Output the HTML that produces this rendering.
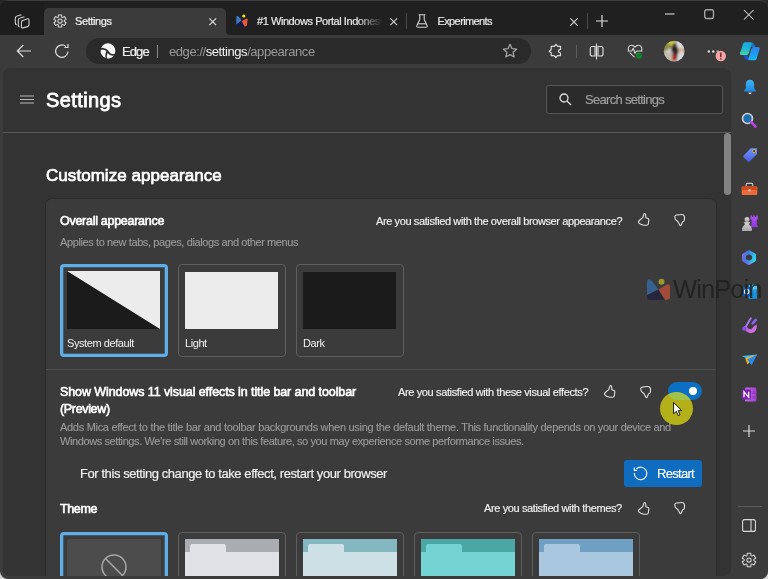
<!DOCTYPE html>
<html><head><meta charset="utf-8">
<style>
*{margin:0;padding:0;box-sizing:border-box}
html,body{width:768px;height:579px;overflow:hidden;background:linear-gradient(#282828 50%,#d4d4d4 50%)}
body{font-family:"Liberation Sans",sans-serif;color:#fff;position:relative}
.a{position:absolute}
.t{position:absolute;white-space:nowrap;line-height:1}
.sb{-webkit-text-stroke:0.6px currentColor}
svg{position:absolute;overflow:visible}
#win{will-change:transform;position:absolute;left:0;top:0;width:768px;height:579px;background:#3b3b3b;border-radius:8px;overflow:hidden}
#strip{position:absolute;left:0;top:0;width:768px;height:35px;background:#202020}
#wb{position:absolute;left:0;top:0;width:768px;height:579px;border-radius:8px;border-top:1px solid #3e3e3e;pointer-events:none}
#content{position:absolute;left:3px;top:68px;width:728px;height:508px;background:#333333;border-radius:7px;overflow:hidden}
.card{position:absolute;background:#3b3b3b;border-radius:6px;box-shadow:0 0 0 1px rgba(0,0,0,.14)}
.sec{color:#9c9c9c}
.tile{position:absolute;width:108px;height:93px;border:1px solid #5e5e5e;border-radius:4px}
.tile.sel{border:3px solid #5eaeea;box-shadow:inset 0 0 0 0.6px rgba(94,174,234,.5)}
.prev{position:absolute;width:93px;height:58px}
.lbl{position:absolute;font-size:11px;letter-spacing:-0.42px;color:#f2f2f2;white-space:nowrap;line-height:1}
.ttile{position:absolute;width:108px;height:60px;border:1px solid #5e5e5e;border-radius:4px}
.ttile.sel{border:3px solid #5eaeea;box-shadow:inset 0 0 0 0.6px rgba(94,174,234,.5)}
</style></head><body>
<div id="win">
  <div id="strip"></div><div id="wb"></div>
  <!-- workspaces button -->
  <div class="a" style="left:0;top:1px;width:44px;height:34px;background:#1d1d1d;border-radius:0 0 4px 0"></div>
  <svg style="left:13px;top:13px" width="18" height="16" viewBox="0 0 18 16" fill="none" stroke="#cfcfcf" stroke-width="1.1" stroke-linejoin="round"><path d="M8.5 1.8 L4.2 3 C3 3.3 2.3 4 2.3 5.2 V9.8 C2.3 11 2.8 11.6 3.8 12"/><path d="M11.5 3.8 L7.2 5 C6 5.3 5.3 6 5.3 7.2 V12.2 C5.3 13.2 5.8 13.8 6.6 14"/><path d="M9.8 7.4 C8.8 7.7 8.4 8.3 8.4 9.3 V13.8 C8.4 14.8 9 15.2 10 14.9 L14.5 13.6 C15.5 13.3 16 12.7 16 11.7 V7 C16 6 15.4 5.5 14.4 5.8 Z"/></svg>
  <!-- active tab -->
  <div class="a" style="left:44px;top:8px;width:182px;height:30px;background:#3b3b3b;border-radius:5px 5px 0 0"></div><div class="a" style="left:226px;top:30px;width:5px;height:5px;background:#3b3b3b"></div><div class="a" style="left:226px;top:8px;width:50px;height:27px;background:#202020;border-radius:0 0 0 4px"></div>
  <svg style="left:53px;top:14px" width="14" height="14" viewBox="0 0 14 14" fill="none" stroke="#d6d6d6" stroke-width="1.05" stroke-linejoin="round"><path d="M5.35 3.03 L5.37 0.91 L8.63 0.91 L8.65 3.03 L9.62 3.59 L11.45 2.55 L13.09 5.37 L11.26 6.44 L11.26 7.56 L13.09 8.63 L11.45 11.45 L9.62 10.41 L8.65 10.97 L8.63 13.09 L5.37 13.09 L5.35 10.97 L4.38 10.41 L2.55 11.45 L0.91 8.63 L2.74 7.56 L2.74 6.44 L0.91 5.37 L2.55 2.55 L4.38 3.59 Z"/><circle cx="7" cy="7" r="2.1"/></svg>
  <div class="t" style="left:75px;top:15.5px;font-size:11px;letter-spacing:-0.41px;color:#f0f0f0;-webkit-text-stroke:0.2px #f0f0f0">Settings</div>
  <svg style="left:209px;top:18px" width="7.5" height="7.5" viewBox="0 0 10 10" stroke="#e2e2e2" stroke-width="1.5"><path d="M0.5 0.5 L9.5 9.5 M9.5 0.5 L0.5 9.5"/></svg>
  <!-- tab 2 -->
  <svg style="left:235px;top:14px" width="14" height="14" viewBox="0 0 14 14"><path d="M1.3 2.8 C1.3 2 2 1.7 2.6 2.1 L6 5 L6.4 12.5 L1.3 10.6 Z" fill="#3a7ac6"/><path d="M1.3 10.6 L6 6.8 L9.8 12.8 L2.8 12.8 C2 12.8 1.3 12 1.3 11.2 Z" fill="#141a4a"/><path d="M6.6 7.2 L11.6 4.6 C12.2 4.3 12.6 4.7 12.6 5.3 L12 11.6 L9.8 12.8 Z" fill="#e8583a"/><circle cx="8.8" cy="2" r="1.6" fill="#f2e626"/></svg>
  <div class="t" style="left:257px;top:15.5px;font-size:11px;letter-spacing:-0.44px;color:#e8e8e8;-webkit-text-stroke:0.2px #e8e8e8;width:125px;overflow:hidden;-webkit-mask-image:linear-gradient(90deg,#000 80%,transparent)">#1 Windows Portal Indonesia</div>
  <svg style="left:389.5px;top:18px" width="7.5" height="7.5" viewBox="0 0 10 10" stroke="#d6d6d6" stroke-width="1.4"><path d="M0.5 0.5 L9.5 9.5 M9.5 0.5 L0.5 9.5"/></svg>
  <div class="a" style="left:406px;top:13px;width:1px;height:16px;background:#4a4a4a"></div>
  <!-- tab 3 -->
  <svg style="left:416px;top:14px" width="12" height="14" viewBox="0 0 12 14" fill="none" stroke="#d0d0d0" stroke-width="1.1" stroke-linejoin="round"><path d="M2.6 0.8 H9.4 M3.8 0.8 V5.6 L0.9 11.6 C0.5 12.5 1 13.2 2 13.2 H10 C11 13.2 11.5 12.5 11.1 11.6 L8.2 5.6 V0.8"/><path d="M2 9.8 H10"/></svg>
  <div class="t" style="left:437.5px;top:15.5px;font-size:11px;letter-spacing:-0.61px;color:#e8e8e8;-webkit-text-stroke:0.2px #e8e8e8">Experiments</div>
  <svg style="left:569.5px;top:17.5px" width="8" height="8" viewBox="0 0 10 10" stroke="#d6d6d6" stroke-width="1.4"><path d="M0.5 0.5 L9.5 9.5 M9.5 0.5 L0.5 9.5"/></svg>
  <div class="a" style="left:587px;top:13px;width:1px;height:16px;background:#4a4a4a"></div>
  <svg style="left:596px;top:15px" width="12" height="12" viewBox="0 0 12 12" stroke="#e0e0e0" stroke-width="1.2"><path d="M6 0 V12 M0 6 H12"/></svg>
  <!-- window controls -->
  <svg style="left:665px;top:14px" width="10" height="1" viewBox="0 0 10 1" stroke="#a8a8a8" stroke-width="1.4"><path d="M0 0 H9.5"/></svg>
  <svg style="left:704px;top:9px" width="10" height="10" viewBox="0 0 10 10" fill="none" stroke="#a4a4a4" stroke-width="1.4"><rect x="0.7" y="0.7" width="8.8" height="8.8" rx="2"/></svg>
  <svg style="left:744px;top:9.5px" width="9.5" height="9.5" viewBox="0 0 10 10" stroke="#d8d8d8" stroke-width="1.1"><path d="M0 0 L10 10 M10 0 L0 10"/></svg>

  <!-- toolbar -->
  <svg style="left:16px;top:44px" width="16" height="14" viewBox="0 0 16 14" fill="none" stroke="#dcdcdc" stroke-width="1.2"><path d="M15 7 H1.5 M7.3 1 L1.3 7 L7.3 13"/></svg>
  <svg style="left:54px;top:43px" width="16" height="16" viewBox="0 0 16 16" fill="none" stroke="#dcdcdc" stroke-width="1.2"><path d="M14 8.5 A6.2 6.2 0 1 1 12 3.6"/><path d="M14 1 V4.5 H10.5"/></svg>
  <div class="a" style="left:86px;top:38px;width:445px;height:25.5px;background:#2a2a2a;border-radius:13px"></div><div class="a" style="left:497px;top:38px;width:1px;height:25.5px;background:#2c2c2c"></div>
  <svg style="left:98px;top:41px" width="20" height="20" viewBox="0 0 20 20" fill="#f6f6f6"><path d="M3.1 6.7 A7.3 7.3 0 0 1 16.7 12.9 C14.8 13.4 12.8 13 11.6 11.6 C10.4 10 9.6 7.2 3.1 6.7 Z"/><path d="M2.7 9 C5 8.6 7.2 9.1 8.4 10.3 C7.5 12 7.1 14.2 7.6 16.9 A7.2 7.2 0 0 1 2.7 9 Z"/><path d="M9.7 12 C11 13.9 13.3 15 16.1 14.6 A7.2 7.2 0 0 1 8.9 17.3 C8.7 15.1 8.9 13.4 9.7 12 Z"/></svg>
  <div class="t" style="left:122px;top:45px;font-size:13px;letter-spacing:-0.9px;color:#f0f0f0;-webkit-text-stroke:0.2px #f0f0f0">Edge</div>
  <div class="a" style="left:157px;top:45px;width:1px;height:13px;background:#8a8a8a"></div>
  <div class="t" style="left:169px;top:45px;font-size:13px;letter-spacing:-0.43px;color:#9a9a9a">edge://<span style="color:#f4f4f4">settings</span>/appearance</div>
  <svg style="left:502px;top:43px" width="16" height="16" viewBox="0 0 16 16" fill="none" stroke="#a6a6a6" stroke-width="1.25" stroke-linejoin="round"><path d="M8 1.3 L10 5.7 L14.6 6.2 L11.1 9.3 L12.1 14 L8 11.6 L3.9 14 L4.9 9.3 L1.4 6.2 L6 5.7 Z"/></svg>
  <svg style="left:546px;top:42px" width="18" height="18" viewBox="0 0 18 18" fill="none" stroke="#dcdcdc" stroke-width="1.2" stroke-linejoin="round"><path d="M5.2 4.3 H8.3 L10 2.4 L11.7 4.3 H14.5 V7.4 C13.2 7.6 12.4 8.3 12.4 9.2 C12.4 10.1 13.2 10.8 14.5 11 V13.6 H11.5 L9.8 15.5 L8.1 13.6 H5.2 V10.9 L3.3 9.2 L5.2 7.5 Z"/></svg>
  <div class="a" style="left:576px;top:45px;width:1px;height:13px;background:#5c5c5c"></div>
  <svg style="left:589px;top:44px" width="16" height="15" viewBox="0 0 16 15" fill="none" stroke="#dcdcdc" stroke-width="1.15"><path d="M6 2.5 H3.3 C2 2.5 1.3 3.3 1.3 4.5 V10 C1.3 11.2 2 12 3.3 12 H6 Z"/><path d="M9 2.5 H12 C13.3 2.5 14 3.3 14 4.5 V10 C14 11.2 13.3 12 12 12 H9 Z"/><path d="M7.5 -0.5 V15.5" stroke-width="1.1"/></svg>
  <svg style="left:627px;top:44px" width="17" height="15" viewBox="0 0 17 15" fill="none" stroke="#d8d8d8" stroke-width="1.1" stroke-linejoin="round" stroke-linecap="round"><path d="M1.6 6.6 C0.6 4 1.8 1.3 4.5 1.3 C6 1.3 7.3 2.2 8 3.1 C8.7 2.2 10 1.3 11.5 1.3 C14.2 1.3 15.4 4 14.7 6.6"/><path d="M1 7 H4.8 L6.3 4.2 L8 9.3 L9.5 7 H15"/><path d="M3 8.8 L7.2 12.8"/><circle cx="12" cy="11.6" r="3.1" fill="#148a2c" stroke="none"/><path d="M10.6 11.7 L11.6 12.6 L13.4 10.7" stroke="#0c4a18" stroke-width="0.8"/></svg>
  <svg style="left:663px;top:40px" width="22" height="22" viewBox="0 0 22 22"><defs><clipPath id="av"><circle cx="11.2" cy="11.2" r="10.5"/></clipPath><filter id="avb" x="-10%" y="-10%" width="120%" height="120%"><feGaussianBlur stdDeviation="0.8"/></filter></defs><g clip-path="url(#av)"><g filter="url(#avb)"><rect width="22" height="22" fill="#dadada"/><rect x="13" y="8" width="9" height="4" fill="#d8b490"/><path d="M0 0 H13 V5 C10 7 6 9 3 11 L0 12 Z" fill="#8e8c48"/><path d="M4 0 H12 L11.5 4 C9.5 5 7 5 5.5 4 Z" fill="#d6cc3a"/><rect x="0" y="12" width="9" height="10" fill="#c4bcae"/><circle cx="11.8" cy="5.2" r="2" fill="#282222"/><path d="M8.5 7.5 C9 6.8 10 6.6 11.8 6.6 C13.5 6.6 14.6 7 15 8 L15.5 12 L14.5 15 L13.5 20.5 H9.5 L9 14.5 L8 11 Z" fill="#2a2424"/><rect x="9.3" y="14.5" width="3" height="6.5" fill="#cc2a2a"/><rect x="12.3" y="14" width="1.8" height="5.5" fill="#7a2222"/><rect x="7.5" y="11.5" width="2.5" height="2.5" fill="#e8e8e8" opacity=".6"/></g></g></svg>
  <svg style="left:704px;top:46px" width="26" height="18" viewBox="0 0 26 18"><circle cx="4.8" cy="5.4" r="1.25" fill="#d8d8d8"/><circle cx="9.3" cy="5.4" r="1.25" fill="#d8d8d8"/><circle cx="13.7" cy="5.4" r="1.25" fill="#a8a8a8"/><circle cx="16.8" cy="10" r="5.2" fill="#f3a4a4"/><rect x="16" y="6.6" width="1.6" height="4.6" rx=".6" fill="#7a3030"/><circle cx="16.8" cy="12.8" r=".85" fill="#7a3030"/></svg>
  <svg style="left:736px;top:38px" width="28" height="26" viewBox="0 0 28 26"><defs><linearGradient id="cp1" x1="0" y1="0" x2="0" y2="1"><stop offset="0" stop-color="#18a8e8"/><stop offset="0.55" stop-color="#20b8d0"/><stop offset="1" stop-color="#48d898"/></linearGradient><linearGradient id="cp2" x1="0" y1="0" x2="0" y2="1"><stop offset="0" stop-color="#3080ec"/><stop offset="0.6" stop-color="#1aa0f0"/><stop offset="1" stop-color="#18b8f0"/></linearGradient></defs><path d="M13 4.3 H15 C16.5 4.3 17.5 5 18 6 L19.5 9 H15 Z" fill="#1878b8"/><path d="M7 17 H10.5 L14 22.3 H12 C10.5 22.3 9.5 21.6 9 20.6 Z" fill="#2050d8"/><path d="M18 9 H22 C23.3 9 23.9 9.8 23.6 11 L20.7 20.4 C20.4 21.6 19.6 22.3 18.4 22.3 H14 C12.8 22.3 12.2 21.5 12.5 20.3 L15.4 10.7 C15.8 9.6 16.7 9 18 9 Z" fill="url(#cp2)"/><path d="M9.5 4.3 H14 C15.3 4.3 15.9 5.1 15.6 6.3 L12.8 15.3 C12.5 16.4 11.8 17 10.7 17 H5.5 C4.3 17 3.7 16.2 4 15 L7 6 C7.4 4.9 8.3 4.3 9.5 4.3 Z" fill="url(#cp1)"/></svg>

  <!-- content -->
  <div id="content">
    <svg style="left:17px;top:26px" width="14" height="10" viewBox="0 0 14 10" stroke="#b8b8b8" stroke-width="1.1"><path d="M0 2 H14 M0 5.5 H14 M0 9 H14"/></svg>
    <div class="t sb" style="left:43px;top:22px;font-size:20px;letter-spacing:0.4px;color:#fff;-webkit-text-stroke:0.8px #fff">Settings</div>
    <div class="a" style="left:543px;top:17px;width:177px;height:29px;background:#2b2b2b;border:1px solid #555;border-radius:3px"></div>
    <svg style="left:556px;top:25px" width="13" height="13" viewBox="0 0 13 13" fill="none" stroke="#e0e0e0" stroke-width="1.3"><circle cx="5" cy="5" r="4"/><path d="M8 8 L12 12"/></svg>
    <div class="t" style="left:582px;top:25px;font-size:13px;letter-spacing:-0.7px;color:#a0a0a0;-webkit-text-stroke:0.15px #a0a0a0">Search settings</div>
    <div class="a" style="left:0;top:64px;width:728px;height:1px;background:#5a5a5a"></div>
    <!-- scrollbar -->
    <div class="a" style="left:721px;top:65px;width:7px;height:62px;background:#828282;border-radius:4px"></div>

    <div class="t sb" style="left:43px;top:99px;font-size:17px;letter-spacing:0.05px;color:#fff;-webkit-text-stroke:0.7px #fff">Customize appearance</div>

    <div class="card" style="left:43px;top:131px;width:670px;height:420px">
      <div class="t sb" style="left:14px;top:15.5px;font-size:12.5px;letter-spacing:-0.28px">Overall appearance</div>
      <div class="t" style="left:330px;top:17px;font-size:11px;letter-spacing:-0.39px;color:#f2f2f2;-webkit-text-stroke:0.15px #f2f2f2">Are you satisfied with the overall browser appearance?</div>
      <svg style="left:591px;top:13px" width="14" height="14" viewBox="0 0 14 14" fill="none" stroke="#e2e2e2" stroke-width="1.1" stroke-linejoin="round"><path d="M7.5 1.5 C8.5 1.5 9 3 8.8 5.8 L11 6.5 C11.8 6.8 11.9 7.5 11.8 8 L11.3 12 C11.2 12.8 10.5 13.2 9.5 13.2 L7 13.2 C5 13 3 12 1.8 10.8 C1.2 10 1.6 9 2.5 8.3 L5.8 5.6 L6.8 2.3 C7 1.7 7.2 1.5 7.5 1.5 Z"/></svg>
      <svg style="left:625.5px;top:13px" width="14" height="14" viewBox="0 0 14 14" fill="none" stroke="#e2e2e2" stroke-width="1.1" stroke-linejoin="round"><path d="M2.8 5.2 C2.5 3.8 3.5 3.2 5 3 L9 2.5 C11 2.3 12.3 3 12.5 5 L12.5 7.5 C12.5 8.8 11.5 9.6 10.5 10 L9.2 13 C8.9 13.8 8.2 13.9 7.9 13.2 L5.8 9.5 L3.6 7.6 C3.1 7 2.9 6.2 2.8 5.2 Z"/></svg>
      <div class="t sec" style="left:14px;top:38px;font-size:11px;letter-spacing:-0.39px;-webkit-text-stroke:0.1px #9c9c9c">Applies to new tabs, pages, dialogs and other menus</div>

      <div class="tile sel" style="left:14px;top:65px">
        <svg style="left:4.3px;top:4px" width="93" height="58"><rect width="93" height="58" fill="#ececec"/><path d="M0 0 L93 58 H0 Z" fill="#1b1b1b"/></svg>
        <div class="lbl" style="left:4px;top:71px">System default</div>
      </div>
      <div class="tile" style="left:132px;top:65px">
        <div class="prev" style="left:6px;top:6.5px;height:57.5px;background:#ececec"></div>
        <div class="lbl" style="left:6px;top:73px">Light</div>
      </div>
      <div class="tile" style="left:250px;top:65px">
        <div class="prev" style="left:6px;top:6.5px;height:57.5px;background:#1b1b1b"></div>
        <div class="lbl" style="left:6px;top:73px">Dark</div>
      </div>

      <div class="a" style="left:0;top:170px;width:670px;height:1px;background:#4c4c4c"></div>

      <div class="t sb" style="left:14px;top:186.5px;font-size:12.5px;letter-spacing:-0.09px">Show Windows 11 visual effects in title bar and toolbar</div>
      <div class="t sb" style="left:14px;top:203.5px;font-size:12.5px;letter-spacing:-0.34px">(Preview)</div>
      <div class="t" style="left:352px;top:188px;font-size:11px;letter-spacing:-0.37px;color:#f2f2f2;-webkit-text-stroke:0.15px #f2f2f2">Are you satisfied with these visual effects?</div>
      <svg style="left:557px;top:185px" width="14" height="14" viewBox="0 0 14 14" fill="none" stroke="#e2e2e2" stroke-width="1.1" stroke-linejoin="round"><path d="M7.5 1.5 C8.5 1.5 9 3 8.8 5.8 L11 6.5 C11.8 6.8 11.9 7.5 11.8 8 L11.3 12 C11.2 12.8 10.5 13.2 9.5 13.2 L7 13.2 C5 13 3 12 1.8 10.8 C1.2 10 1.6 9 2.5 8.3 L5.8 5.6 L6.8 2.3 C7 1.7 7.2 1.5 7.5 1.5 Z"/></svg>
      <svg style="left:591.5px;top:185px" width="14" height="14" viewBox="0 0 14 14" fill="none" stroke="#e2e2e2" stroke-width="1.1" stroke-linejoin="round"><path d="M2.8 5.2 C2.5 3.8 3.5 3.2 5 3 L9 2.5 C11 2.3 12.3 3 12.5 5 L12.5 7.5 C12.5 8.8 11.5 9.6 10.5 10 L9.2 13 C8.9 13.8 8.2 13.9 7.9 13.2 L5.8 9.5 L3.6 7.6 C3.1 7 2.9 6.2 2.8 5.2 Z"/></svg>
      <div class="a" style="left:622px;top:183px;width:34px;height:18px;border-radius:9px;background:#0b6fc4"></div>
      <div class="a" style="left:643px;top:188px;width:8px;height:8px;border-radius:50%;background:#fff"></div>
      <div class="t sec" style="left:14px;top:223px;font-size:11px;letter-spacing:-0.3px;-webkit-text-stroke:0.1px #9c9c9c">Adds Mica effect to the title bar and toolbar backgrounds when using the default theme. This functionality depends on your device and</div>
      <div class="t sec" style="left:14px;top:237px;font-size:11px;letter-spacing:-0.4px;-webkit-text-stroke:0.1px #9c9c9c">Windows settings. We’re still working on this feature, so you may experience some performance issues.</div>

      <div class="t" style="left:34px;top:268px;font-size:13px;letter-spacing:-0.42px;color:#f2f2f2;-webkit-text-stroke:0.15px #f2f2f2">For this setting change to take effect, restart your browser</div>
      <div class="a" style="left:577.5px;top:261px;width:78.5px;height:27px;background:#0f6cbf;border-radius:3px"></div>
      <svg style="left:587px;top:267px" width="15" height="15" viewBox="0 0 15 15" fill="none" stroke="#f4f4f4" stroke-width="1.15"><path d="M3.2 2.9 A6.3 6.3 0 1 1 1.3 7"/><path d="M1.3 1.5 V4.3 H4.1"/></svg>
      <div class="t" style="left:611px;top:268px;font-size:13px;letter-spacing:-0.7px;color:#fff;-webkit-text-stroke:0.15px #fff">Restart</div>

      <div class="t sb" style="left:14px;top:303.5px;font-size:12.5px;letter-spacing:-0.38px">Theme</div>
      <div class="t" style="left:438px;top:304px;font-size:11px;letter-spacing:-0.38px;color:#f2f2f2;-webkit-text-stroke:0.15px #f2f2f2">Are you satisfied with themes?</div>
      <svg style="left:591px;top:301.5px" width="14" height="14" viewBox="0 0 14 14" fill="none" stroke="#e2e2e2" stroke-width="1.1" stroke-linejoin="round"><path d="M7.5 1.5 C8.5 1.5 9 3 8.8 5.8 L11 6.5 C11.8 6.8 11.9 7.5 11.8 8 L11.3 12 C11.2 12.8 10.5 13.2 9.5 13.2 L7 13.2 C5 13 3 12 1.8 10.8 C1.2 10 1.6 9 2.5 8.3 L5.8 5.6 L6.8 2.3 C7 1.7 7.2 1.5 7.5 1.5 Z"/></svg>
      <svg style="left:625.5px;top:301px" width="14" height="14" viewBox="0 0 14 14" fill="none" stroke="#e2e2e2" stroke-width="1.1" stroke-linejoin="round"><path d="M2.8 5.2 C2.5 3.8 3.5 3.2 5 3 L9 2.5 C11 2.3 12.3 3 12.5 5 L12.5 7.5 C12.5 8.8 11.5 9.6 10.5 10 L9.2 13 C8.9 13.8 8.2 13.9 7.9 13.2 L5.8 9.5 L3.6 7.6 C3.1 7 2.9 6.2 2.8 5.2 Z"/></svg>

      <div class="ttile sel" style="left:14px;top:333px">
        <div class="a" style="left:4px;top:4px;width:94px;height:60px;background:#4c4c4c;border-radius:2px"></div>
        <svg style="left:38px;top:19px" width="26" height="26" viewBox="0 0 26 26" fill="none" stroke="#a8a8a8" stroke-width="1.5"><circle cx="13" cy="13" r="12"/><path d="M4.5 4.5 L21.5 21.5"/></svg>
      </div>
      <div class="ttile" style="left:132px;top:333px">
        <div class="a" style="left:6px;top:6px;width:94px;height:60px;background:#e0e2e5"></div>
        <div class="a" style="left:6px;top:6px;width:94px;height:13px;background:#a9adb2"></div>
        <div class="a" style="left:11px;top:11px;width:36px;height:12px;background:#e0e2e5;border-radius:2px 2px 0 0"></div>
      </div>
      <div class="ttile" style="left:250px;top:333px">
        <div class="a" style="left:6px;top:6px;width:94px;height:60px;background:#cde0e5"></div>
        <div class="a" style="left:6px;top:6px;width:94px;height:13px;background:#84b6c0"></div>
        <div class="a" style="left:11px;top:11px;width:36px;height:12px;background:#cde0e5;border-radius:2px 2px 0 0"></div>
      </div>
      <div class="ttile" style="left:368px;top:333px">
        <div class="a" style="left:6px;top:6px;width:94px;height:60px;background:#74d3d3"></div>
        <div class="a" style="left:6px;top:6px;width:94px;height:13px;background:#4aa7a3"></div>
        <div class="a" style="left:11px;top:11px;width:36px;height:12px;background:#74d3d3;border-radius:2px 2px 0 0"></div>
      </div>
      <div class="ttile" style="left:486px;top:333px">
        <div class="a" style="left:6px;top:6px;width:94px;height:60px;background:#a9c8df"></div>
        <div class="a" style="left:6px;top:6px;width:94px;height:13px;background:#6fa0c4"></div>
        <div class="a" style="left:11px;top:11px;width:36px;height:12px;background:#a9c8df;border-radius:2px 2px 0 0"></div>
      </div>
    </div>
  </div>

  <!-- sidebar -->
  <div class="a" style="left:731px;top:68px;width:37px;height:511px;background:#3b3b3b"></div>
  <svg style="left:742px;top:79px" width="16" height="16" viewBox="0 0 16 16"><defs><linearGradient id="bl" x1="0" y1="0" x2="0" y2="1"><stop offset="0" stop-color="#3cb4f4"/><stop offset="1" stop-color="#1f88e6"/></linearGradient></defs><path d="M8 0.8 C5.2 0.8 3.8 2.8 3.8 5.5 V9.5 L2 11.8 C1.8 12.2 2 12.5 2.4 12.5 H13.6 C14 12.5 14.2 12.2 14 11.8 L12.2 9.5 V5.5 C12.2 2.8 10.8 0.8 8 0.8 Z" fill="url(#bl)"/><path d="M6.3 13.6 H9.7 C9.5 14.6 8.8 15.2 8 15.2 C7.2 15.2 6.5 14.6 6.3 13.6 Z" fill="#e0e0e0"/></svg>
  <svg style="left:741px;top:112px" width="16" height="16" viewBox="0 0 16 16"><circle cx="6.5" cy="6.5" r="5" fill="#1d6fb0" stroke="#cfcfcf" stroke-width="1.6"/><path d="M10.2 10.2 L14.5 14.5" stroke="#c040e0" stroke-width="2.6" stroke-linecap="round"/></svg>
  <svg style="left:741px;top:146px" width="18" height="18" viewBox="0 0 18 18"><defs><linearGradient id="tg" x1="0" y1="0" x2="0" y2="1"><stop offset="0" stop-color="#7096fa"/><stop offset="1" stop-color="#4a5ce6"/></linearGradient></defs><path d="M10.5 2.2 H15 C15.6 2.2 16 2.6 16 3.2 V7.6 C16 8 15.9 8.3 15.6 8.6 L8.6 15.6 C8.1 16.1 7.4 16.1 6.9 15.6 L2.6 11.3 C2.1 10.8 2.1 10.1 2.6 9.6 L9.6 2.6 C9.9 2.3 10.2 2.2 10.5 2.2 Z" fill="url(#tg)"/><circle cx="13.1" cy="5.1" r="1.5" fill="#2a2a50" stroke="#e8c020" stroke-width="0.9"/></svg>
  <svg style="left:741px;top:182px" width="17" height="14" viewBox="0 0 17 14"><path d="M5.2 4.5 V2.5 C5.2 1.8 5.6 1.4 6.3 1.4 H10.7 C11.4 1.4 11.8 1.8 11.8 2.5 V4.5" stroke="#c8c8c8" stroke-width="1.1" fill="none"/><path d="M1.5 4.6 H15.5 C16 4.6 16.3 5 16.3 5.5 V12 C16.3 12.7 15.8 13.1 15.1 13.1 H1.9 C1.2 13.1 0.7 12.7 0.7 12 V5.5 C0.7 5 1 4.6 1.5 4.6 Z" fill="#ee6a3a"/><path d="M1.5 4.6 H15.5 C16 4.6 16.3 5 16.3 5.5 V8 H0.7 V5.5 C0.7 5 1 4.6 1.5 4.6 Z" fill="#d24a1c"/><circle cx="8.5" cy="8.2" r="1.2" fill="#c8c8c8"/></svg>
  <svg style="left:740px;top:213px" width="18" height="18" viewBox="0 0 18 18"><defs><linearGradient id="rk" x1="0" y1="0" x2="0" y2="1"><stop offset="0" stop-color="#b050f4"/><stop offset="1" stop-color="#9038e0"/></linearGradient><linearGradient id="pw" x1="0" y1="0" x2="0" y2="1"><stop offset="0" stop-color="#d4d4d4"/><stop offset="1" stop-color="#a8a8a8"/></linearGradient></defs><path d="M10.5 2.5 H12 V4 H13.3 V2.5 H14.8 V4 H16.2 V2.5 H17.8 V6 L16.8 7 V11.5 L17.8 13 V14.2 H10.5 V13 L11.5 11.5 V7 L10.5 6 Z" fill="url(#rk)"/><circle cx="7" cy="6.6" r="2.5" fill="url(#pw)"/><path d="M5 9 H9 L9.3 11.8 C10.8 12.8 12 14.5 12 17.2 C12 17.6 11.7 18 11.3 18 H2.7 C2.3 18 2 17.6 2 17.2 C2 14.5 3.2 12.8 4.7 11.8 Z" fill="url(#pw)"/><rect x="3.8" y="9" width="6.4" height="1.3" rx=".6" fill="#c0c0c0"/></svg>
  <svg style="left:740px;top:248px" width="18" height="18" viewBox="0 0 18 18"><defs><linearGradient id="m3" x1="0" y1="0" x2="1" y2="0.3"><stop offset="0" stop-color="#9a60e0"/><stop offset=".45" stop-color="#3a7ae0"/><stop offset="1" stop-color="#30d0f0"/></linearGradient><linearGradient id="m3b" x1="0" y1="0" x2="1" y2="0"><stop offset="0" stop-color="#7050d8"/><stop offset="1" stop-color="#c080f0"/></linearGradient></defs><path d="M10 2.6 L15.2 5.5 C15.8 5.9 16 6.4 16 7 V12 C16 12.6 15.8 13.1 15.2 13.5 L10 16.4 C9.4 16.8 8.6 16.8 8 16.4 L2.8 13.5 C2.2 13.1 2 12.6 2 12 V7 C2 6.4 2.2 5.9 2.8 5.5 L8 2.6 C8.6 2.2 9.4 2.2 10 2.6 Z M9 6.3 L6 8 V11 L9 12.7 L12 11 V8 Z" fill="url(#m3)" fill-rule="evenodd"/><path d="M2 11 C3 13 5.5 15 9 15.2 C11 15.2 13 14.5 14.5 13.2 L10 16.4 C9.4 16.8 8.6 16.8 8 16.4 L2.8 13.5 C2.2 13.1 2 12.6 2 12 Z" fill="url(#m3b)" opacity=".9"/></svg>
  <svg style="left:740px;top:283px" width="18" height="18" viewBox="0 0 18 18"><defs><linearGradient id="ol" x1="0" y1="0" x2="0" y2="1"><stop offset="0" stop-color="#30b8f0"/><stop offset="1" stop-color="#1078d0"/></linearGradient></defs><rect x="8.6" y="1.8" width="8.1" height="14" rx="1" fill="url(#ol)"/><rect x="12.6" y="1.8" width="4.1" height="4.5" fill="#58c8f4"/><rect x="8.6" y="10" width="8.1" height="5.8" fill="#1890e0"/><rect x="2.7" y="4" width="8" height="9.2" rx="0.9" fill="#0a5cb4"/><circle cx="6.7" cy="8.6" r="2.3" fill="none" stroke="#e6e6e6" stroke-width="1.2"/></svg>
  <svg style="left:740px;top:316px" width="18" height="18" viewBox="0 0 18 18"><defs><linearGradient id="dg" x1="0" y1="0" x2="1" y2="1"><stop offset="0" stop-color="#9a50e8"/><stop offset="1" stop-color="#f07ad8"/></linearGradient></defs><path d="M4 10 C4.5 15 8 17.3 11.5 16.9 C15.5 16.4 17.6 12.5 16.6 8.3 L13 11 C12.6 12.5 11.4 13.3 10 13.1 C8.6 12.9 7.3 11.8 6.8 10.3 Z" fill="url(#dg)"/><path d="M5 12 L10.8 2.2" stroke="#a878f4" stroke-width="1.9" stroke-linecap="round"/><circle cx="4.3" cy="12.6" r="2.2" fill="#8050e0"/><path d="M12.6 7.3 L15.8 4" stroke="#8a60f0" stroke-width="2.6" stroke-linecap="round"/></svg>
  <svg style="left:740px;top:351px" width="18" height="16" viewBox="0 0 18 16"><path d="M1.8 5 L17.2 3.6 L7 7.6 Z" fill="#40c0f4"/><path d="M5.2 7.2 L17.2 3.6 L7.4 13.6 Z" fill="#f4b41c"/><path d="M7.2 8.4 L17.2 3.6 L11.6 14.2 Z" fill="#2a88ec"/></svg>
  <svg style="left:740px;top:386px" width="18" height="17" viewBox="0 0 18 17"><defs><linearGradient id="on" x1="0" y1="0" x2="1" y2="0"><stop offset="0" stop-color="#c070e8"/><stop offset="1" stop-color="#a040d0"/></linearGradient></defs><rect x="5" y="1.5" width="11.3" height="14" rx="1.2" fill="url(#on)"/><rect x="12.5" y="5" width="3.8" height="3" fill="#9a3cc8"/><rect x="12.5" y="10" width="3.8" height="3" fill="#9a3cc8"/><rect x="1.7" y="3.5" width="9.3" height="10" rx="0.9" fill="#7a22a8"/><path d="M4 11.3 V5.8 L8.7 11.3 V5.8" stroke="#f4f4f4" stroke-width="1.3" fill="none"/></svg>
  <svg style="left:743px;top:425px" width="12" height="12" viewBox="0 0 12 12" stroke="#d8d8d8" stroke-width="1.2"><path d="M6 0 V12 M0 6 H12"/></svg>
  <div class="a" style="left:738px;top:506px;width:24px;height:1px;background:#5a5a5a"></div>
  <svg style="left:742px;top:519px" width="14" height="13" viewBox="0 0 14 13" fill="none" stroke="#d8d8d8" stroke-width="1.1"><rect x="0.6" y="0.6" width="12.8" height="11.8" rx="2"/><path d="M9 0.6 V12.4"/></svg>
  <svg style="left:741px;top:552px" width="16" height="16" viewBox="0 0 16 16" fill="none" stroke="#d8d8d8" stroke-width="1.05" stroke-linejoin="round"><path d="M6.12 3.47 L6.19 1.24 L9.81 1.24 L9.88 3.47 L10.98 4.11 L12.95 3.05 L14.76 6.19 L12.86 7.36 L12.86 8.64 L14.76 9.81 L12.95 12.95 L10.98 11.89 L9.88 12.53 L9.81 14.76 L6.19 14.76 L6.12 12.53 L5.02 11.89 L3.05 12.95 L1.24 9.81 L3.14 8.64 L3.14 7.36 L1.24 6.19 L3.05 3.05 L5.02 4.11 Z"/><circle cx="8" cy="8" r="2.1"/></svg>

  <!-- watermark -->
  <svg style="left:645px;top:277px" width="27" height="25" viewBox="0 0 27 25" opacity="0.88"><path d="M2 4.8 C2 2.6 4 1.6 5.6 2.8 C6.6 3.6 7.3 4.6 8.2 5.8 L13.5 12.5 L2 18.2 Z" fill="#36679a"/><path d="M2 18.2 L13.5 12.5 L19 23 H5 C3.3 23 2 21.8 2 20 Z" fill="#22223e"/><path d="M13.5 12.5 L22 7.6 C23.5 6.8 25 7.7 25 9.3 V20 C25 21 24.5 21.8 23.6 22.3 L20.5 23.2 Z" fill="#b04e38"/><circle cx="16.5" cy="4.8" r="3" fill="#aaa42c"/></svg>
  <div class="t" style="left:673px;top:277px;font-size:25.5px;letter-spacing:-0.9px;color:#1e1e1e;opacity:.85">WinPoin</div>

  <!-- cursor highlight -->
  <div class="a" style="left:660px;top:392px;width:33px;height:33px;border-radius:50%;background:rgba(244,239,8,.65)"></div>
  <svg style="left:673px;top:402px" width="10" height="15" viewBox="0 0 11 17"><path d="M0.5 0.5 V13.5 L3.5 10.5 L5.8 15.5 L7.8 14.6 L5.6 9.8 H9.8 Z" fill="#fff" stroke="#000" stroke-width="1"/></svg>
</div>
</body></html>
